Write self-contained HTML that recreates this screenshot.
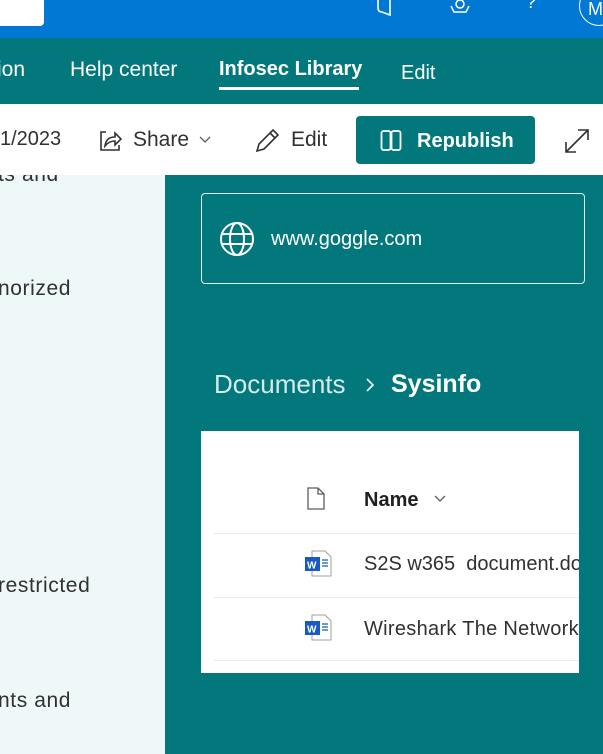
<!DOCTYPE html>
<html><head><style>
*{margin:0;padding:0;box-sizing:border-box}
body{width:603px;height:754px;overflow:hidden;font-family:"Liberation Sans",sans-serif;position:relative;background:#03787c}
.a{position:absolute}
</style></head><body>
<div class="a" style="left:0;top:0;width:603px;height:38px;background:#0078d4"></div>
<div class="a" style="left:0;top:0;width:44px;height:26px;background:#fff;border-radius:0 0 4px 0"></div>
<svg class="a" style="left:372px;top:0" width="30" height="16"><path d="M6 0v8q0 4 4 4l8 3V0" fill="none" stroke="#fff" stroke-width="1.6"/></svg>
<svg class="a" style="left:447px;top:0" width="26" height="16"><circle cx="13" cy="4" r="4" fill="none" stroke="#fff" stroke-width="1.5"/><path d="M4 6l3 6h12l3-6" fill="none" stroke="#fff" stroke-width="1.5"/></svg>
<div class="a" style="left:526px;top:-8px;color:#fff;font-size:18px">?</div>
<div class="a" style="left:579px;top:-14px;width:40px;height:40px;border:1.5px solid #fff;border-radius:50%;color:#fff;font-size:18px;padding:12px 0 0 8px">M</div>
<div class="a" style="left:0;top:38px;width:603px;height:66px;background:#03787c"></div>
<div class="a" style="left:-3px;top:58px;color:#fff;font-size:21px">ion</div>
<div class="a" style="left:70px;top:58px;color:#fff;font-size:21px">Help center</div>
<div class="a" style="left:219px;top:58px;color:#fff;font-size:20px;font-weight:bold">Infosec Library</div>
<div class="a" style="left:219px;top:87px;width:140px;height:3px;background:#fff"></div>
<div class="a" style="left:401px;top:62px;color:#fff;font-size:20px">Edit</div>
<div class="a" style="left:0;top:104px;width:603px;height:71px;background:#fff"></div>
<div class="a" style="left:0;top:128px;color:#323130;font-size:20px">1/2023</div>
<svg class="a" style="left:97px;top:128px" width="26" height="26"><path d="M9 4H4v18h18v-5" fill="none" stroke="#323130" stroke-width="1.6"/><path d="M8 18q1-9 10-9V5l6 6-6 6v-4q-6 0-10 5z" fill="none" stroke="#323130" stroke-width="1.6"/></svg>
<div class="a" style="left:133px;top:128px;color:#323130;font-size:21px">Share</div>
<svg class="a" style="left:198px;top:134px" width="14" height="10"><path d="M2 3l5 5 5-5" fill="none" stroke="#605e5c" stroke-width="1.3"/></svg>
<svg class="a" style="left:253px;top:127px" width="28" height="28"><path d="M4 24l2-7L20 3l5 5-14 14z M17 6l5 5" fill="none" stroke="#323130" stroke-width="1.6"/></svg>
<div class="a" style="left:291px;top:128px;color:#323130;font-size:21px">Edit</div>
<div class="a" style="left:356px;top:116px;width:179px;height:48px;background:#03787c;border-radius:4px"></div>
<svg class="a" style="left:380px;top:129px" width="24" height="24"><rect x="1.5" y="2" width="9" height="19" rx="2" fill="none" stroke="#fff" stroke-width="1.8"/><rect x="11.5" y="2" width="9" height="19" rx="2" fill="none" stroke="#fff" stroke-width="1.8"/></svg>
<div class="a" style="left:417px;top:130px;color:#fff;font-size:20px;font-weight:bold">Republish</div>
<svg class="a" style="left:563px;top:127px" width="28" height="28"><path d="M3 25L25 3M3 15v10h10M15 3h10v10" fill="none" stroke="#323130" stroke-width="1.6"/></svg>
<div class="a" style="left:0;top:175px;width:165px;height:579px;background:#eff8f8;color:#323130;font-size:21px;letter-spacing:0.6px;overflow:hidden">
<div class="a" style="left:-2px;top:-12px">ts and</div>
<div class="a" style="left:-2px;top:102px">norized</div>
<div class="a" style="left:-2px;top:399px">restricted</div>
<div class="a" style="left:-2px;top:514px">nts and</div>
</div>
<div class="a" style="left:201px;top:193px;width:384px;height:91px;border:1px solid #e1efef;border-radius:4px"></div>
<svg class="a" style="left:219px;top:221px" width="36" height="36"><circle cx="18" cy="18" r="16" fill="none" stroke="#fff" stroke-width="2"/><ellipse cx="18" cy="18" rx="7" ry="16" fill="none" stroke="#fff" stroke-width="2"/><path d="M3 13h30M3 23h30" stroke="#fff" stroke-width="2"/></svg>
<div class="a" style="left:271px;top:228px;color:#fff;font-size:20px">www.goggle.com</div>
<div class="a" style="left:214px;top:369px;color:#d5ebeb;font-size:26px">Documents</div>
<svg class="a" style="left:364px;top:377px" width="12" height="16"><path d="M3 2l6 6-6 6" fill="none" stroke="#fff" stroke-width="1.6"/></svg>
<div class="a" style="left:391px;top:370px;color:#fff;font-size:25px;font-weight:bold">Sysinfo</div>
<div class="a" style="left:201px;top:431px;width:378px;height:242px;background:#fff;overflow:hidden">
<svg class="a" style="left:104px;top:55px" width="22" height="26"><path d="M3 2h10l6 6v15H3z M13 2v6h6" fill="none" stroke="#605e5c" stroke-width="1.3"/></svg>
<div class="a" style="left:163px;top:58px;color:#201f1e;font-size:20px;font-weight:bold">Name</div>
<svg class="a" style="left:232px;top:63px" width="14" height="10"><path d="M2 2l5 5 5-5" fill="none" stroke="#605e5c" stroke-width="1.3"/></svg>
<div class="a" style="left:13px;top:102px;width:370px;height:1px;background:#edebe9"></div>
<div class="a" style="left:13px;top:166px;width:370px;height:1px;background:#edebe9"></div>
<div class="a" style="left:13px;top:229px;width:370px;height:1px;background:#edebe9"></div>
<svg class="a" style="left:103px;top:118px" width="30" height="30"><path d="M8 2h13l6 6v19H8z" fill="#fff" stroke="#a19f9d"/><path d="M18 11h6M18 14h6M18 17h6" stroke="#185abd" stroke-width="1.3"/><rect x="1" y="8" width="15" height="14" fill="#185abd"/><text x="3" y="19.5" fill="#fff" font-size="10" font-weight="bold" font-family="Liberation Sans">W</text></svg>
<svg class="a" style="left:103px;top:182px" width="30" height="30"><path d="M8 2h13l6 6v19H8z" fill="#fff" stroke="#a19f9d"/><path d="M18 11h6M18 14h6M18 17h6" stroke="#185abd" stroke-width="1.3"/><rect x="1" y="8" width="15" height="14" fill="#185abd"/><text x="3" y="19.5" fill="#fff" font-size="10" font-weight="bold" font-family="Liberation Sans">W</text></svg>
<div class="a" style="left:163px;top:122px;color:#323130;font-size:20px;white-space:nowrap">S2S w365&nbsp; document.docx</div>
<div class="a" style="left:163px;top:187px;color:#323130;font-size:20px;white-space:nowrap;letter-spacing:0.3px">Wireshark The Network</div>
</div>
</body></html>
